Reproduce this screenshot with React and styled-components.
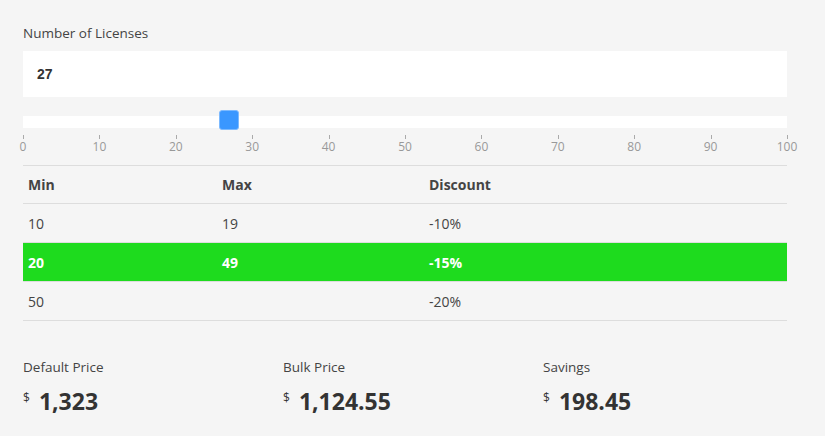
import React from "react";
import styled, { createGlobalStyle } from "styled-components";

const GlobalStyle = createGlobalStyle`
  html, body {
    margin: 0;
    padding: 0;
    background: #f5f5f5;
  }
  body {
    font-family: "Open Sans", "Noto Sans", sans-serif;
    color: #444;
  }
`;

const Page = styled.div`
  width: 764px;
  padding: 24px 0 0 23px;
`;

const Label = styled.div`
  font-size: 13.5px;
  line-height: 18px;
  color: #444;
`;

const Input = styled.div`
  margin-top: 9px;
  height: 46px;
  background: #fff;
  display: flex;
  align-items: center;
  padding-left: 14px;
  font-family: "Liberation Sans", Arial, sans-serif;
  font-weight: bold;
  font-size: 14px;
  color: #333;
`;

const SliderWrap = styled.div`
  margin-top: 19px;
  position: relative;
`;

const Track = styled.div`
  height: 12px;
  background: #fff;
`;

const Thumb = styled.div`
  position: absolute;
  top: -6px;
  width: 18px;
  height: 18px;
  margin-left: -10px;
  background: #3a97ff;
  border: 1px solid #7dbaff;
  border-radius: 3px;
`;

const Scale = styled.div`
  position: relative;
  height: 37px;
`;

const Tick = styled.div`
  position: absolute;
  top: 7px;
  width: 1px;
  height: 4px;
  background: #aaa;
`;

const TickLabel = styled.div`
  position: absolute;
  top: 10px;
  transform: translateX(-50%);
  font-size: 12px;
  line-height: 18px;
  color: #999;
`;

const Table = styled.table`
  width: 764px;
  border-collapse: collapse;
  table-layout: fixed;
  font-size: 14px;
  border-top: 1px solid #ddd;
`;

const Th = styled.th`
  text-align: left;
  font-weight: bold;
  color: #444;
  height: 37px;
  padding: 0 0 0 5px;
  border-bottom: 1px solid #ddd;
`;

const Row = styled.tr`
  background: ${(p) => (p.$active ? "#1edb1e" : "transparent")};
  color: ${(p) => (p.$active ? "#fff" : "#444")};
  font-weight: ${(p) => (p.$active ? "bold" : "normal")};
`;

const Td = styled.td`
  height: 38px;
  padding: 0 0 0 5px;
  border-bottom: 1px solid #ddd;
`;

const Summary = styled.div`
  margin-top: 37px;
  display: grid;
  grid-template-columns: 260px 260px 244px;
`;

const Stat = styled.div`
  display: flex;
  flex-direction: column;
  gap: 9px;
`;

const StatLabel = styled.div`
  font-size: 13.5px;
  line-height: 18px;
  color: #444;
`;

const Price = styled.div`
  display: flex;
  align-items: flex-start;
  color: #333;
`;

const Currency = styled.span`
  font-size: 12px;
  line-height: 18px;
  margin: 4px 9px 0 0;
`;

const Amount = styled.span`
  font-size: 23px;
  font-weight: bold;
  line-height: 32px;
`;

const ticks = [0, 10, 20, 30, 40, 50, 60, 70, 80, 90, 100];

const tiers = [
  { min: 10, max: 19, discount: "-10%" },
  { min: 20, max: 49, discount: "-15%" },
  { min: 50, max: "", discount: "-20%" },
];

export default function App() {
  const value = 27;
  return (
    <Page>
      <GlobalStyle />
      <Label>Number of Licenses</Label>
      <Input>{value}</Input>
      <SliderWrap>
        <Track />
        <Thumb style={{ left: `${value}%` }} />
      </SliderWrap>
      <Scale>
        {ticks.map((t) => (
          <React.Fragment key={t}>
            <Tick style={{ left: `${t}%` }} />
            <TickLabel style={{ left: `${t}%` }}>{t}</TickLabel>
          </React.Fragment>
        ))}
      </Scale>
      <Table>
        <colgroup>
          <col style={{ width: 194 }} />
          <col style={{ width: 207 }} />
          <col />
        </colgroup>
        <thead>
          <tr>
            <Th>Min</Th>
            <Th>Max</Th>
            <Th>Discount</Th>
          </tr>
        </thead>
        <tbody>
          {tiers.map((r) => (
            <Row key={r.min} $active={value >= r.min && (r.max === "" || value <= r.max)}>
              <Td>{r.min}</Td>
              <Td>{r.max}</Td>
              <Td>{r.discount}</Td>
            </Row>
          ))}
        </tbody>
      </Table>
      <Summary>
        <Stat>
          <StatLabel>Default Price</StatLabel>
          <Price>
            <Currency>$</Currency>
            <Amount>1,323</Amount>
          </Price>
        </Stat>
        <Stat>
          <StatLabel>Bulk Price</StatLabel>
          <Price>
            <Currency>$</Currency>
            <Amount>1,124.55</Amount>
          </Price>
        </Stat>
        <Stat>
          <StatLabel>Savings</StatLabel>
          <Price>
            <Currency>$</Currency>
            <Amount>198.45</Amount>
          </Price>
        </Stat>
      </Summary>
    </Page>
  );
}
